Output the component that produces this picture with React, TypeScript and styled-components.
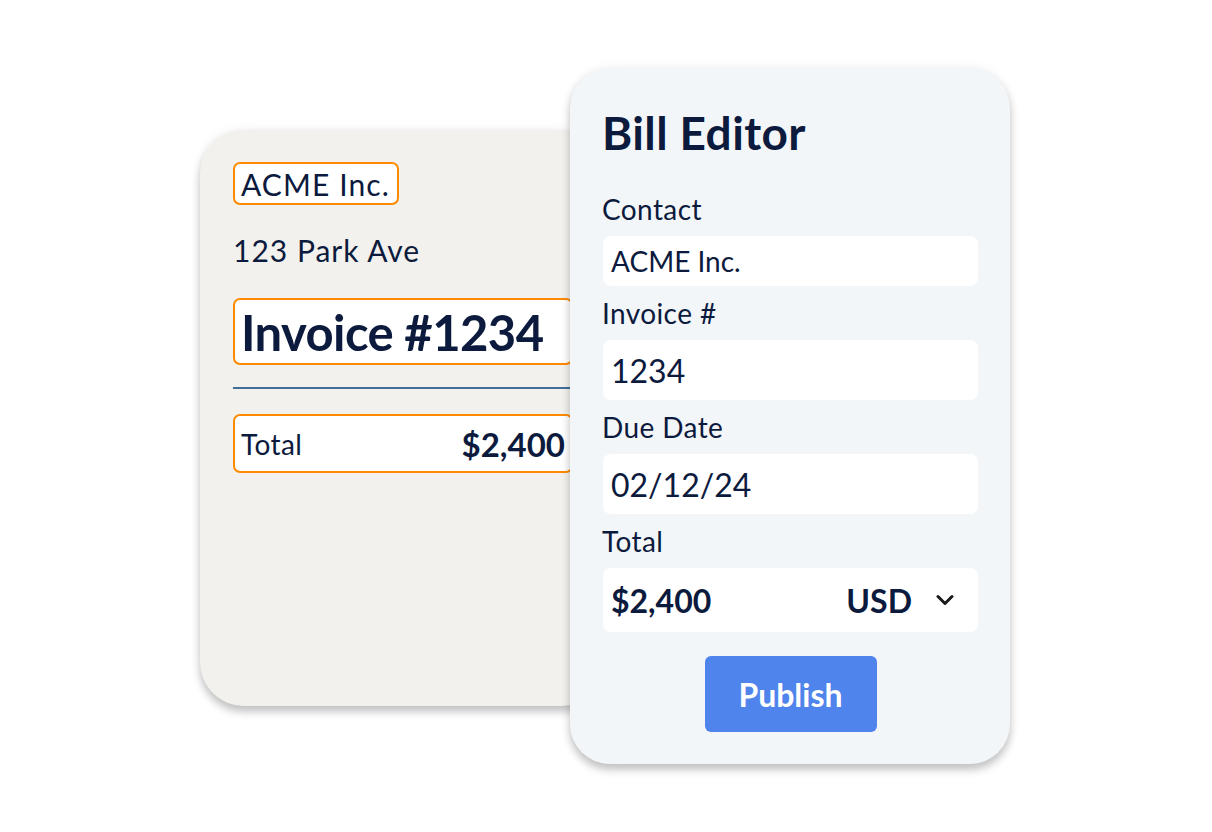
import * as React from 'react';
import styled, { createGlobalStyle } from 'styled-components';

const GlobalStyle = createGlobalStyle`
  html, body {
    margin: 0;
    padding: 0;
    background: #ffffff;
  }
  body {
    font-family: Lato, "Noto Sans", sans-serif;
    color: #0c1a3d;
  }
  * {
    box-sizing: border-box;
  }
`;

const ink = '#0c1a3d';
const orange = '#ff8a00';

const Stage = styled.div`
  width: 1212px;
  height: 832px;
  padding: 68px 0 0 200px;
  display: grid;
  grid-template-columns: 370px 36px 404px;
  grid-template-rows: 62px 576px 58px;
`;

const cardShadow = `
  box-shadow: 0 6px 8px rgba(0, 0, 0, 0.22), 0 0 12px rgba(0, 0, 0, 0.06);
`;

const InvoiceCard = styled.div`
  grid-column: 1 / 3;
  grid-row: 2 / 3;
  background: #f2f1ed;
  border-radius: 44px;
  padding: 32px 33px;
  display: flex;
  flex-direction: column;
  align-items: flex-start;
  ${cardShadow}
`;

const Tag = styled.div`
  height: 43px;
  padding: 0 7px 0 6px;
  border: 2px solid ${orange};
  border-radius: 7px;
  background: #fff;
  display: flex;
  align-items: center;
  font-size: 30px;
  letter-spacing: 1.1px;
  color: ${ink};
`;

const Address = styled.div`
  margin-top: 27px;
  font-size: 30px;
  line-height: 36px;
  letter-spacing: 1px;
  color: ${ink};
`;

const HighlightBox = styled.div<{ $h: number }>`
  width: 340px;
  height: ${(p) => p.$h}px;
  padding: 0 6px;
  border: 2px solid ${orange};
  border-radius: 7px;
  background: #fff;
  display: flex;
  align-items: center;
  justify-content: space-between;
  color: ${ink};
`;

const InvoiceTitle = styled.span`
  font-size: 49px;
  font-weight: 700;
  letter-spacing: -0.6px;
`;

const Rule = styled.div`
  width: 340px;
  height: 2px;
  background: #3f6f99;
  margin: 22px 0 25px;
`;

const TotalLabel = styled.span`
  font-size: 28px;
  letter-spacing: 0.4px;
`;

const TotalValue = styled.span`
  font-size: 33px;
  font-weight: 700;
`;

const EditorCard = styled.div`
  grid-column: 2 / 4;
  grid-row: 1 / 4;
  z-index: 1;
  background: #f3f6f9;
  border-radius: 40px;
  padding: 37px 32px 32px 33px;
  display: flex;
  flex-direction: column;
  gap: 10px;
  ${cardShadow}
`;

const Title = styled.h1`
  margin: 0 0 21px -1px;
  font-size: 46px;
  line-height: 56px;
  font-weight: 700;
  letter-spacing: 0.4px;
  color: ${ink};
`;

const Label = styled.div`
  margin-left: -1px;
  font-size: 28px;
  line-height: 34px;
  letter-spacing: 0.4px;
  color: ${ink};
`;

const Field = styled.div<{ $h: number; $size: number; $bold?: boolean }>`
  height: ${(p) => p.$h}px;
  background: #ffffff;
  border-radius: 8px;
  padding: 0 24px 0 8px;
  display: flex;
  align-items: center;
  gap: 24px;
  font-size: ${(p) => p.$size}px;
  font-weight: ${(p) => (p.$bold ? 700 : 400)};
  color: ${ink};
`;

const Grow = styled.span`
  flex: 1;
`;

const Publish = styled.button`
  align-self: center;
  margin-top: 14px;
  width: 172px;
  height: 76px;
  border: none;
  border-radius: 6px;
  background: #4f84ec;
  color: #ffffff;
  font-family: inherit;
  font-size: 32px;
  font-weight: 700;
  cursor: pointer;
`;

const Chevron = () => (
  <svg width="18" height="12" viewBox="0 0 18 12" fill="none">
    <path d="M2 2.5l7 7 7-7" stroke="#1a1a1a" strokeWidth="3" strokeLinecap="round" strokeLinejoin="round" />
  </svg>
);

export default function App() {
  return (
    <>
      <GlobalStyle />
      <Stage>
        <InvoiceCard>
          <Tag>ACME Inc.</Tag>
          <Address>123 Park Ave</Address>
          <HighlightBox $h={67} style={{ marginTop: 30 }}>
            <InvoiceTitle>Invoice #1234</InvoiceTitle>
          </HighlightBox>
          <Rule />
          <HighlightBox $h={59}>
            <TotalLabel>Total</TotalLabel>
            <TotalValue>$2,400</TotalValue>
          </HighlightBox>
        </InvoiceCard>

        <EditorCard>
          <Title>Bill Editor</Title>
          <Label>Contact</Label>
          <Field $h={50} $size={28}>ACME Inc.</Field>
          <Label>Invoice #</Label>
          <Field $h={60} $size={32}>1234</Field>
          <Label>Due Date</Label>
          <Field $h={60} $size={32}>02/12/24</Field>
          <Label>Total</Label>
          <Field $h={64} $size={32} $bold>
            <Grow>$2,400</Grow>
            <span>USD</span>
            <Chevron />
          </Field>
          <Publish>Publish</Publish>
        </EditorCard>
      </Stage>
    </>
  );
}
